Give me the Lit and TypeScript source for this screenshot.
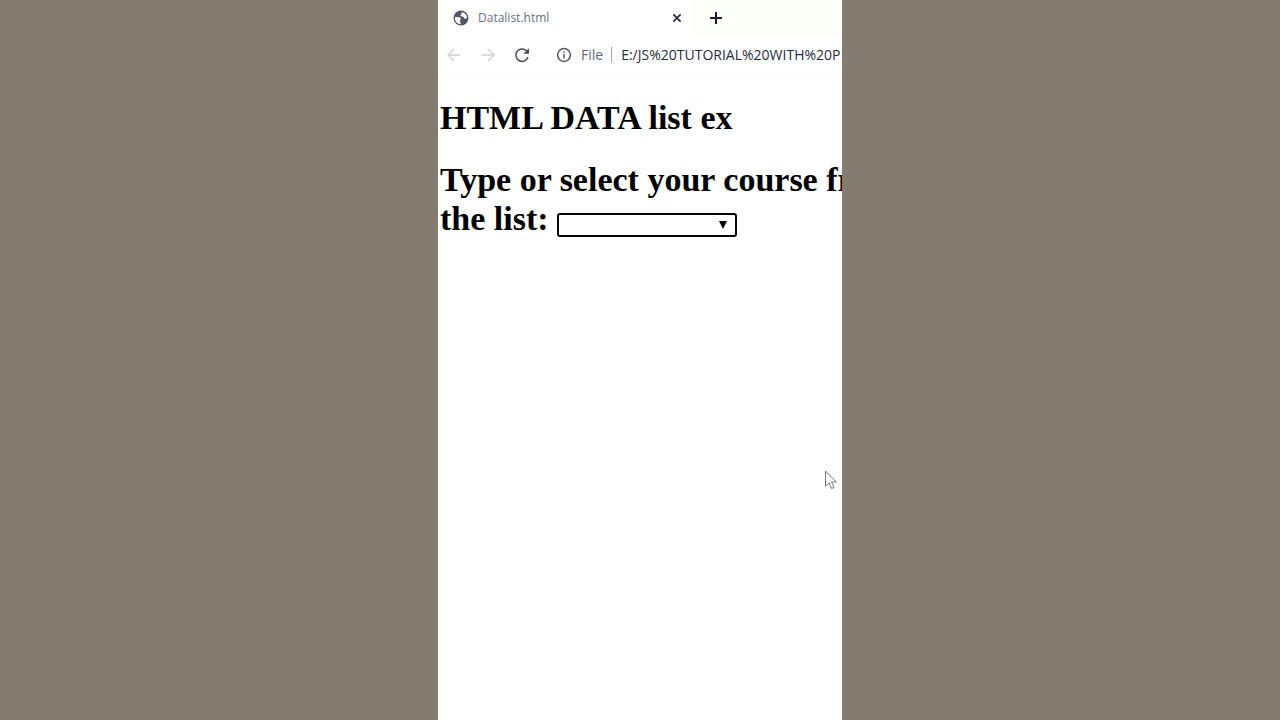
import { LitElement, html, css } from "lit";
import { customElement } from "lit/decorators.js";

@customElement("browser-bar")
class BrowserBar extends LitElement {
  static styles = css`
    :host {
      display: block;
      font-family: "Segoe UI", "Open Sans", "Noto Sans", sans-serif;
      color: #4c4d60;
    }
    svg {
      display: block;
    }
    button {
      display: flex;
      padding: 0;
      border: 0;
      background: none;
      color: inherit;
    }
    button:disabled {
      color: #d2d0d0;
    }
    .tabs {
      display: flex;
      height: 36px;
      background: #fbfff8;
    }
    .tab {
      display: flex;
      align-items: center;
      gap: 8px;
      box-sizing: border-box;
      width: 63%;
      padding: 0 8px 0 14px;
      background: #fff;
    }
    .title {
      flex: 1;
      font-size: 12px;
      line-height: 20px;
      color: #6a7080;
    }
    .close,
    .add {
      color: #1c1a36;
    }
    .add {
      align-items: center;
      padding: 0 15px;
    }
    .toolbar {
      display: flex;
      align-items: center;
      gap: 16px;
      box-sizing: border-box;
      height: 39px;
      padding-left: 7px;
      background: #fff;
      border-bottom: 1px solid #f8f8f8;
    }
    .address {
      display: flex;
      flex: 1;
      align-items: center;
      gap: 8px;
      min-width: 0;
      padding-left: 8px;
      font-size: 14px;
      line-height: 20px;
    }
    .scheme {
      color: #62667a;
    }
    .rule {
      flex: none;
      width: 1px;
      height: 16px;
      background: #aaa6b0;
    }
    .url {
      flex: 1;
      min-width: 0;
      padding: 0 0 0 1px;
      border: 0;
      outline: 0;
      background: none;
      font: inherit;
      color: #292a42;
    }
  `;

  render() {
    return html`
      <div class="tabs">
        <div class="tab">
          <svg width="18" height="18" viewBox="0 0 18 18">
            <circle cx="9" cy="9" r="7.500" fill="#535569" />
            <path d="M2.800 8.200C5 8 8 8 8.600 9.400c.5 1.200-.8 1.500-.6 2.500.1.900 1 1.300.6 3.300C5.400 15 2.700 12.300 2.800 8.200z" fill="#fff" />
            <path d="M10 3.200c2.800.3 5 2.800 5.100 5.500-.9.800-1.600 1.300-2.500.8-1-.5-.7-1.600-1.700-2-.9-.3-2 .3-2.400-.7-.4-1.200 1.300-1.400 1.500-3.600z" fill="#fff" />
          </svg>
          <span class="title">Datalist.html</span>
          <button class="close" aria-label="Close tab">
            <svg width="16" height="16" viewBox="0 0 16 16" fill="none" stroke="currentColor" stroke-width="1.500">
              <path d="M4.400 4.400l7.200 7.200M11.600 4.400l-7.200 7.200" />
            </svg>
          </button>
        </div>
        <button class="add" aria-label="New tab">
          <svg width="16" height="16" viewBox="0 0 16 16" fill="none" stroke="currentColor" stroke-width="2">
            <path d="M8 2v12M2 8h12" />
          </svg>
        </button>
      </div>
      <div class="toolbar">
        <button disabled aria-label="Back">
          <svg width="18" height="18" viewBox="0 0 18 18" fill="none" stroke="currentColor" stroke-width="1.300">
            <path d="M15.500 9H3M9 3L3 9l6 6" />
          </svg>
        </button>
        <button disabled aria-label="Forward">
          <svg width="18" height="18" viewBox="0 0 18 18" fill="none" stroke="currentColor" stroke-width="1.300">
            <path d="M2.500 9H15M9 3l6 6-6 6" />
          </svg>
        </button>
        <button aria-label="Reload">
          <svg width="18" height="18" viewBox="0 0 18 18">
            <path d="M14.300 5.800A6.200 6.200 0 1 0 15 11" fill="none" stroke="currentColor" stroke-width="1.500" />
            <path d="M16 2.200V7.800H10.400z" fill="currentColor" />
          </svg>
        </button>
        <div class="address">
          <svg width="18" height="18" viewBox="0 0 18 18" fill="none" stroke="#55576c" stroke-width="1.500">
            <circle cx="9" cy="9" r="6.400" />
            <path d="M9 8v4.500M9 5.300v1.500" />
          </svg>
          <label class="scheme" for="url">File</label>
          <span class="rule"></span>
          <input class="url" id="url" type="text" value="E:/JS%20TUTORIAL%20WITH%20P" />
        </div>
      </div>
    `;
  }
}

@customElement("course-page")
class CoursePage extends LitElement {
  static styles = css`
    :host {
      display: block;
      padding: 0 2px;
      font-family: "Liberation Serif", "Times New Roman", serif;
      color: #000;
    }
    h1 {
      margin: 23px 0;
      font-size: 34px;
      line-height: 39px;
      font-weight: 700;
      white-space: nowrap;
    }
    .combo {
      display: inline-flex;
      align-items: center;
      box-sizing: border-box;
      width: 180px;
      height: 24px;
      padding: 0 8px 0 4px;
      border: 2px solid #08080c;
      border-radius: 3px;
      background: #fff;
      vertical-align: baseline;
    }
    .combo input {
      flex: 1;
      min-width: 0;
      padding: 0;
      border: 0;
      outline: 0;
      background: none;
      font: 14px "Liberation Sans", Arial, sans-serif;
    }
    .combo input::-webkit-calendar-picker-indicator {
      display: none !important;
    }
  `;

  render() {
    return html`
      <h1>HTML DATA list ex</h1>
      <h1>
        <label for="course">Type or select your course fr<br />the list:</label>
        <span class="combo">
          <input id="course" list="courses" />
          <svg width="8" height="8" viewBox="0 0 8 8"><path d="M0 0h8L4 8z" /></svg>
        </span>
      </h1>
      <datalist id="courses"></datalist>
    `;
  }
}

@customElement("app-root")
class AppRoot extends LitElement {
  static styles = css`
    :host {
      display: flex;
      justify-content: center;
      height: 100vh;
      background: #847b71;
    }
    .screen {
      position: relative;
      aspect-ratio: 101 / 180;
      height: 100%;
      overflow: hidden;
      background: #fff;
    }
    .pointer {
      position: absolute;
      top: 470px;
      right: 4px;
    }
  `;

  render() {
    return html`
      <main class="screen">
        <browser-bar></browser-bar>
        <course-page></course-page>
        <svg class="pointer" width="14" height="20" viewBox="0 0 14 20" fill="#fff" stroke="#77777c">
          <path d="M1.500 1v15.200l3.500-3.300 2.600 5.600 2.500-1.100-2.500-5.400h4.700z" />
        </svg>
      </main>
    `;
  }
}
